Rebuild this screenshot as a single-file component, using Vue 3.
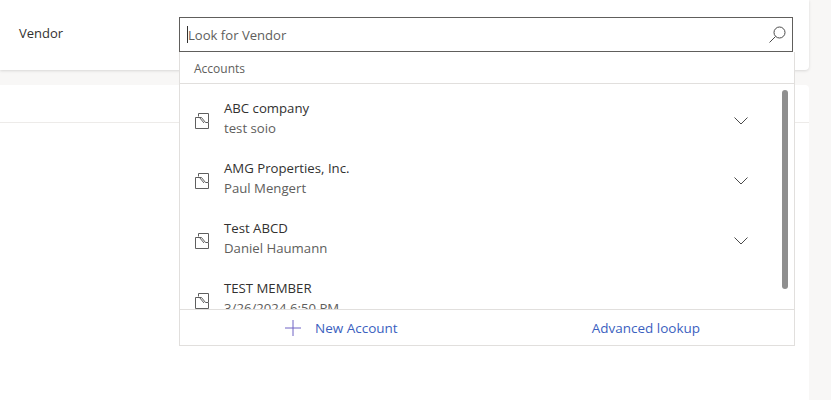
<script setup>
const rows = [
  { name: 'ABC company', sub: 'test soio', more: true },
  { name: 'AMG Properties, Inc.', sub: 'Paul Mengert', more: true },
  { name: 'Test ABCD', sub: 'Daniel Haumann', more: true },
  { name: 'TEST MEMBER', sub: '3/26/2024 6:50 PM', more: false },
]
</script>

<template>
  <div class="page">
    <section class="card top">
      <span class="label">Vendor</span>
      <div class="lookup">
        <div class="field">
          <span class="caret"></span>
          <span class="placeholder">Look for Vendor</span>
          <svg class="search" width="17" height="17" viewBox="0 0 17 17" fill="none" stroke="#4a4a4a" stroke-width="1">
            <circle cx="10.5" cy="6.5" r="5.5" />
            <path d="M6.5 10.5 L0.5 16.5" />
          </svg>
        </div>
        <div class="menu">
          <div class="menu-head">Accounts</div>
          <div class="list">
            <div v-for="row in rows" :key="row.name" class="row">
              <svg class="entity" width="14" height="17" viewBox="0 0 14 17" fill="none" stroke="#5f5f5f" stroke-width="1">
                <path d="M3.5 4.5 V1.5 H13.5 V10" />
                <path d="M0.5 16.5 V5.5 H6.5 L10.5 10.5 H13.5 V16.5 Z" />
                <path d="M4.5 5.5 L9 11" />
              </svg>
              <div class="text">
                <div class="name">{{ row.name }}</div>
                <div class="sub">{{ row.sub }}</div>
              </div>
              <svg v-if="row.more" class="chev" width="14" height="8" viewBox="0 0 14 8" fill="none" stroke="#4a4a4a" stroke-width="1">
                <path d="M0.5 0.5 L7 7 L13.5 0.5" />
              </svg>
            </div>
            <div class="thumb"></div>
          </div>
          <div class="menu-foot">
            <div class="foot-cell new">
              <svg width="18" height="18" viewBox="0 0 18 18" stroke="#6f63c4" stroke-width="1">
                <path d="M9 1 V17 M1 9 H17" />
              </svg>
              <span>New Account</span>
            </div>
            <div class="foot-cell adv">Advanced lookup</div>
          </div>
        </div>
      </div>
    </section>
    <section class="card bottom">
      <div class="bottom-head"></div>
    </section>
  </div>
</template>

<style>
html, body { margin: 0; background: #f8f7f6; }
</style>

<style scoped>
.page {
  width: 831px;
  height: 400px;
  overflow: hidden;
  display: flex;
  flex-direction: column;
  gap: 15px;
  background: #f8f7f6;
  font-family: "Open Sans", "Noto Sans", sans-serif;
  font-size: 13.2px;
  color: #323130;
}
.card {
  width: 809px;
  background: #fff;
  border-radius: 0 0 4px 0;
}
.top {
  height: 70px;
  box-sizing: border-box;
  padding: 17px 0 0 19px;
  display: flex;
  box-shadow: 0 1px 3px rgba(0, 0, 0, 0.13);
  position: relative;
  z-index: 1;
}
.label { width: 160px; line-height: 32px; font-size: 13px; }
.bottom { flex: 1; border-radius: 0 4px 0 0; }
.bottom-head { height: 37px; border-bottom: 1px solid #edebe9; }
.lookup { position: relative; width: 614px; }
.field {
  height: 35px;
  box-sizing: border-box;
  border: 1px solid #605e5c;
  display: flex;
  align-items: center;
  padding: 0 6px 0 7px;
  background: #fff;
}
.caret { width: 1px; height: 17px; background: #323130; }
.placeholder { flex: 1; color: #605e5c; font-size: 13.1px; }
.menu {
  position: absolute;
  left: 0;
  top: 35px;
  width: 616px;
  height: 294px;
  box-sizing: border-box;
  background: #fff;
  border: 1px solid #e1dfdd;
  border-top: 0;
  display: flex;
  flex-direction: column;
}
.menu-head {
  height: 32px;
  box-sizing: border-box;
  flex: none;
  padding: 9px 0 0 14px;
  font-size: 12px;
  line-height: 16px;
  color: #605e5c;
  border-bottom: 1px solid #e1dfdd;
}
.list { position: relative; flex: 1; overflow: hidden; padding-top: 4px; }
.row {
  height: 60px;
  display: flex;
  align-items: center;
  padding-left: 15px;
}
.entity { margin-top: 5px; flex: none; }
.text { margin-left: 15px; flex: 1; line-height: 20px; }
.sub { color: #605e5c; }
.chev { margin: 5px 46px 0 0; }
.thumb {
  position: absolute;
  left: 602px;
  top: 6px;
  width: 6px;
  height: 199px;
  border-radius: 3px;
  background: #8f8f8f;
}
.menu-foot {
  height: 36px;
  flex: none;
  box-sizing: border-box;
  border-top: 1px solid #e1dfdd;
  display: flex;
  align-items: center;
  font-size: 13.5px;
  color: #3b5fc0;
}
.foot-cell { display: flex; align-items: center; }
.new { margin-left: 104px; gap: 13px; }
.adv { margin-left: 194px; }
</style>
